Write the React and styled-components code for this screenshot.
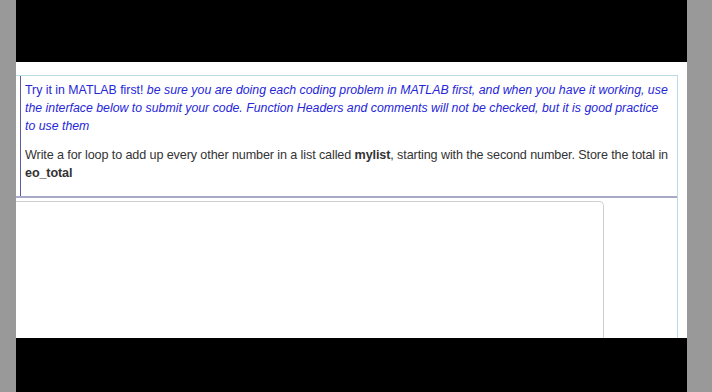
import React from 'react';
import styled, { createGlobalStyle } from 'styled-components';

const GlobalStyle = createGlobalStyle`
  html, body {
    margin: 0;
    padding: 0;
    background: #999999;
  }
  body {
    font-family: "Liberation Sans", Arial, sans-serif;
  }
`;

const Screen = styled.div`
  display: flex;
  width: 712px;
  height: 392px;
  background: #999999;
`;

const Gutter = styled.div`
  width: ${props => props.size}px;
  flex-shrink: 0;
  background: #999999;
`;

const Page = styled.div`
  flex: 1;
  min-width: 0;
  display: flex;
  flex-direction: column;
`;

const Bar = styled.div`
  height: ${props => props.size}px;
  flex-shrink: 0;
  background: #000;
`;

const Content = styled.div`
  flex: 1;
  background: #fff;
  padding-top: 13px;
  display: flex;
  flex-direction: column;
  overflow: hidden;
`;

const Frame = styled.div`
  flex: 1;
  min-width: 0;
  margin-right: 9px;
  border-top: 1px solid #bcdbe4;
  border-right: 1.5px solid #bcdbe4;
  display: flex;
  flex-direction: column;
`;

const Prompt = styled.div`
  padding-left: 4px;
  border-bottom: 2px solid #a9a9c9;
`;

const PromptBody = styled.div`
  border-left: 1.5px solid #5c5ca0;
  padding: 5px 4px 14px 4px;
`;

const Note = styled.p`
  margin: 0 0 11px;
  font-size: 12.3px;
  letter-spacing: 0.01px;
  line-height: 18px;
  color: #2626d8;
  white-space: nowrap;
`;

const Task = styled.p`
  margin: 0;
  font-size: 12.6px;
  letter-spacing: -0.11px;
  line-height: 18px;
  color: #333;
  white-space: nowrap;
`;

const Editor = styled.div`
  margin-top: 3px;
  width: 587px;
  flex: 1;
  border: 1.5px solid #cfcfcf;
  border-left: none;
  border-bottom: none;
  border-top-right-radius: 5px;
`;

export default function App() {
  return (
    <>
      <GlobalStyle />
      <Screen>
        <Gutter size={16} />
        <Page>
          <Bar size={62} />
          <Content>
            <Frame>
              <Prompt>
                <PromptBody>
                  <Note>
                    Try it in MATLAB first! <i>be sure you are doing each coding problem in MATLAB first, and when you have it working, use<br />
                    the interface below to submit your code. Function Headers and comments will not be checked, but it is good practice<br />
                    to use them</i>
                  </Note>
                  <Task>
                    Write a for loop to add up every other number in a list called <b>mylist</b>, starting with the second number. Store the total in<br />
                    <b>eo_total</b>
                  </Task>
                </PromptBody>
              </Prompt>
              <Editor />
            </Frame>
          </Content>
          <Bar size={54} />
        </Page>
        <Gutter size={25} />
      </Screen>
    </>
  );
}
